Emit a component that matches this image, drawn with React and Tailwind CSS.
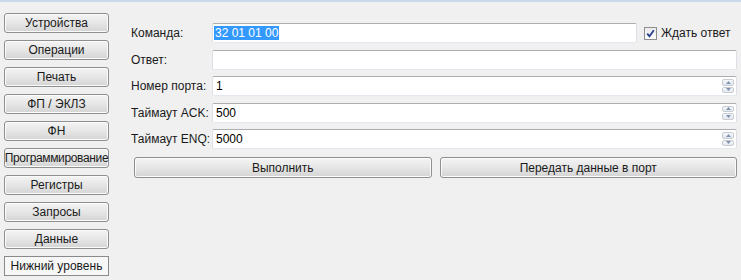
import React from "react";

const navItems = [
  { label: "Устройства", cls: "" },
  { label: "Операции", cls: "" },
  { label: "Печать", cls: "" },
  { label: "ФП / ЭКЛЗ", cls: "" },
  { label: "ФН", cls: "" },
  { label: "Программирование", cls: "tracking-[-0.35px]" },
  { label: "Регистры", cls: "" },
  { label: "Запросы", cls: "" },
  { label: "Данные", cls: "" },
];

function NavButton({ label, cls }) {
  return (
    <div className={"h-[20px] w-[105px] flex items-center justify-center rounded-[3px] border border-[#8e8f8f] bg-gradient-to-b from-[#f4f4f4] via-[#e6e6e6] to-[#d4d4d4] text-[12px] text-[#1a1a1a] leading-none whitespace-nowrap shadow-[inset_0_0_0_1px_#fbfbfb] " + cls}>
      {label}
    </div>
  );
}

function Spinner() {
  return (
    <div className="absolute right-[2px] top-[2px] bottom-[2px] w-[12px] flex flex-col gap-[1px]">
      <div className="flex-1 flex items-center justify-center rounded-[2px] border border-[#c8ccd2] bg-gradient-to-b from-[#f5f7fa] to-[#e3e8ee]">
        <svg width="5" height="3" viewBox="0 0 5 3"><path d="M0 3 L2.5 0 L5 3 Z" fill="#7e93b0" /></svg>
      </div>
      <div className="flex-1 flex items-center justify-center rounded-[2px] border border-[#c8ccd2] bg-gradient-to-b from-[#f5f7fa] to-[#e3e8ee]">
        <svg width="5" height="3" viewBox="0 0 5 3"><path d="M0 0 L2.5 3 L5 0 Z" fill="#7e93b0" /></svg>
      </div>
    </div>
  );
}

function Field({ label, value, spinner }) {
  return (
    <div className="flex items-center h-[20px]">
      <div className="w-[81px] text-[12px] text-[#1a1a1a] whitespace-nowrap">{label}</div>
      <div className="relative flex-1 h-[20px] bg-white border border-[#abadb3] border-l-[#dbdfe6] border-r-[#dbdfe6] border-b-[#e3e9ef] rounded-[2px] flex items-center pl-[3px] text-[12px] text-black">
        {value}
        {spinner && <Spinner />}
      </div>
    </div>
  );
}

function ActionButton({ label }) {
  return (
    <div className="flex-1 h-[21px] flex items-center justify-center rounded-[3px] border border-[#8e8f8f] bg-gradient-to-b from-[#f4f4f4] via-[#e6e6e6] to-[#d4d4d4] shadow-[inset_0_0_0_1px_#fbfbfb] text-[12px] text-[#1a1a1a]">
      {label}
    </div>
  );
}

export default function App() {
  return (
    <div
      className="w-[741px] h-[280px] bg-[#f0f0f0] border-t-[2px] border-[#c9d9ea] flex overflow-hidden"
      style={{ fontFamily: '"Liberation Sans", Arial, sans-serif' }}
    >
      <div className="flex flex-col gap-[7px] pl-[4px] pt-[11px] w-[127px] shrink-0">
        {navItems.map((n) => (
          <NavButton key={n.label} label={n.label} cls={n.cls} />
        ))}
        <div className="h-[20px] w-[105px] flex items-center justify-center border border-[#8a8a8a] bg-[#f7f7f7] text-[12px] text-[#1a1a1a] whitespace-nowrap">
          Нижний уровень
        </div>
      </div>

      <div className="flex-1 flex flex-col pt-[21px] pr-[4px] pl-[4px]">
        <div className="flex flex-col gap-[6.5px]">
          <div className="flex items-center h-[20px]">
            <div className="w-[81px] text-[12px] text-[#1a1a1a] whitespace-nowrap">Команда:</div>
            <div className="w-[425px] h-[20px] bg-white border border-[#abadb3] border-l-[#dbdfe6] border-r-[#dbdfe6] border-b-[#e3e9ef] rounded-[2px] flex items-center pl-[1px] text-[12px]">
              <span className="bg-[#3399ff] text-white px-[1px] leading-[14px]">32 01 01 00</span>
            </div>
            <div className="flex items-center ml-[7px] gap-[4px]">
              <div className="w-[13px] h-[13px] border border-[#8f8f8f] bg-gradient-to-b from-[#eaeaea] to-[#fdfdfd] flex items-center justify-center">
                <svg width="9" height="9" viewBox="0 0 9 9">
                  <path d="M1.2 4.6 L3.5 7.2 L7.8 1.3" stroke="#2a3f8f" strokeWidth="1.8" fill="none" />
                </svg>
              </div>
              <span className="text-[12px] text-[#1a1a1a] whitespace-nowrap">Ждать ответ</span>
            </div>
          </div>
          <Field label="Ответ:" value="" />
          <Field label="Номер порта:" value="1" spinner />
          <Field label="Таймаут ACK:" value="500" spinner />
          <Field label="Таймаут ENQ:" value="5000" spinner />
        </div>
        <div className="flex gap-[8px] mt-[8px] pl-[3px]">
          <ActionButton label="Выполнить" />
          <ActionButton label="Передать данные в порт" />
        </div>
      </div>
    </div>
  );
}
